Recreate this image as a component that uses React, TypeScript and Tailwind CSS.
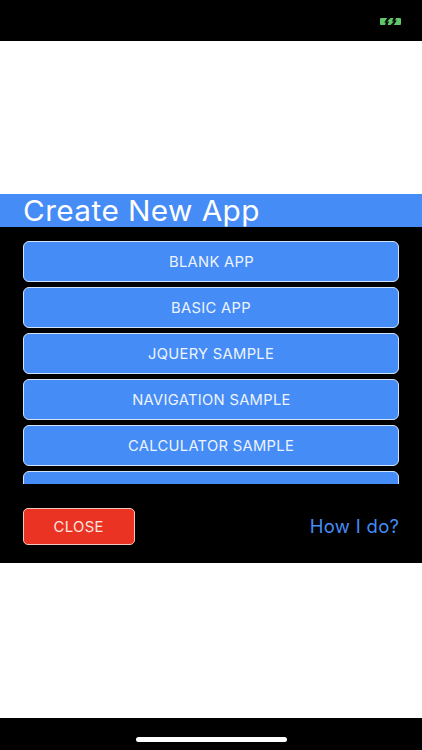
const items = ["BLANK APP", "BASIC APP", "JQUERY SAMPLE", "NAVIGATION SAMPLE", "CALCULATOR SAMPLE", ""];

export default function App() {
  return (
    <div className="w-[422px] h-[750px] flex flex-col bg-white overflow-hidden font-['Inter',sans-serif]">
      <div className="h-[41px] bg-black flex items-start justify-end pt-[18px] pr-[21px]">
        <svg width="21" height="7" viewBox="0 0 21 7">
          <rect x="0" y="0" width="21" height="7" rx="1" fill="#5fc76a" />
          <path d="M10.5 0 L7 3.6 L9 3.6 L7.6 7 L5 7 L5.8 4.6 L4.2 4.6 L7.2 0 Z" fill="#0a0a0a" />
          <path d="M10.5 7 L14 3.4 L12 3.4 L13.4 0 L16 0 L15.2 2.4 L16.8 2.4 L13.8 7 Z" fill="#0a0a0a" />
        </svg>
      </div>
      <div className="h-[153px] bg-white" />
      <div className="h-[33px] bg-[#458cf6] pl-[23px] flex items-center">
        <span className="text-white text-[28px] leading-[33px] tracking-[0.4px] whitespace-nowrap pt-[2px] origin-left scale-x-[1.063]">Create New App</span>
      </div>
      <div className="h-[336px] bg-black flex flex-col">
        <div className="mt-[14px] mx-[23px] h-[243px] overflow-hidden flex flex-col gap-[5px]">
          {items.map((t, i) => (
            <div key={i} className="h-[41px] shrink-0 rounded-[6px] border border-[#d3e3fb] bg-[#458cf6] flex items-center justify-center text-[#eef4fe] text-[14px] tracking-[0.3px]">
              <span className="scale-x-[1.05]">{t}</span>
            </div>
          ))}
        </div>
        <div className="mt-[24px] mx-[23px] flex items-center justify-between">
          <div className="w-[112px] h-[37px] rounded-[5px] border border-[#f3c4b8] bg-[#eb3323] flex items-center justify-center text-[#fbe6e0] text-[14px] tracking-[0.3px]">
            <span className="scale-x-[1.06]">CLOSE</span>
          </div>
          <span className="text-[#458cf6] text-[18px] tracking-[0.3px] origin-right scale-x-[1.025]">How I do?</span>
        </div>
      </div>
      <div className="h-[155px] bg-white" />
      <div className="h-[32px] bg-black flex justify-center pt-[19px]">
        <div className="w-[151px] h-[5px] rounded-full bg-white" />
      </div>
    </div>
  );
}
